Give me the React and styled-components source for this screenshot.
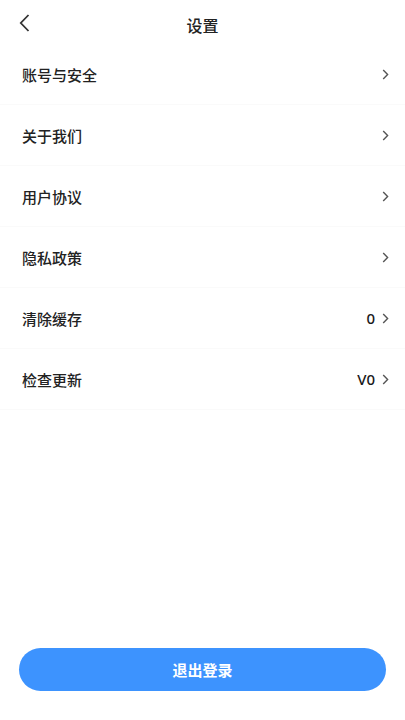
import React from "react";
import styled, { createGlobalStyle } from "styled-components";

const Global = createGlobalStyle`
  html, body { margin: 0; padding: 0; background: #fff; }
  body { font-family: "Noto Sans CJK SC", "Noto Sans", sans-serif; }
`;

const Page = styled.div`
  width: 405px;
  height: 720px;
  display: flex;
  flex-direction: column;
  background: #fff;
  box-sizing: border-box;
`;

const Header = styled.div`
  position: relative;
  height: 44px;
  padding-top: 5px;
  box-sizing: border-box;
  display: flex;
  align-items: center;
  justify-content: center;
`;

const Back = styled.button`
  position: absolute;
  left: 14px;
  top: 10px;
  width: 20px;
  height: 26px;
  border: 0;
  background: none;
  padding: 0;
  display: flex;
  align-items: center;
  justify-content: center;
`;

const Title = styled.div`
  font-size: 16px;
  color: #222;
  font-weight: 500;
`;

const List = styled.div`
  display: flex;
  flex-direction: column;
`;

const Row = styled.div`
  height: 61px;
  box-sizing: border-box;
  padding: 0 16px 0 22px;
  display: flex;
  align-items: center;
  border-bottom: 1px solid #fafafa;
`;

const Label = styled.div`
  flex: 1;
  font-size: 15px;
  font-weight: 500;
  color: #222;
`;

const Value = styled.span`
  font-family: "Noto Sans", sans-serif;
  font-size: 15px;
  font-weight: 500;
  color: #1a1a1a;
  margin-right: 7px;
`;

const Spacer = styled.div`
  flex: 1;
`;

const Logout = styled.button`
  margin: 0 19px 29px 19px;
  height: 43px;
  border: 0;
  border-radius: 22px;
  background: #3d93fe;
  color: #fff;
  font-family: "Noto Sans CJK SC", sans-serif;
  font-size: 15px;
  font-weight: 700;
`;

const Chevron = () => (
  <svg width="7" height="11" viewBox="0 0 7 11">
    <path d="M1.2 1 L5.6 5.5 L1.2 10" fill="none" stroke="#555" strokeWidth="1.4" />
  </svg>
);

const BackIcon = () => (
  <svg width="11" height="18" viewBox="0 0 11 18">
    <path d="M9.5 1 L1.8 9 L9.5 17" fill="none" stroke="#333" strokeWidth="1.8" />
  </svg>
);

const items = [
  { label: "账号与安全" },
  { label: "关于我们" },
  { label: "用户协议" },
  { label: "隐私政策" },
  { label: "清除缓存", value: "0" },
  { label: "检查更新", value: "V0" },
];

export default function App() {
  return (
    <Page>
      <Global />
      <Header>
        <Back aria-label="back">
          <BackIcon />
        </Back>
        <Title>设置</Title>
      </Header>
      <List>
        {items.map((it) => (
          <Row key={it.label}>
            <Label>{it.label}</Label>
            {it.value && <Value>{it.value}</Value>}
            <Chevron />
          </Row>
        ))}
      </List>
      <Spacer />
      <Logout>退出登录</Logout>
    </Page>
  );
}
